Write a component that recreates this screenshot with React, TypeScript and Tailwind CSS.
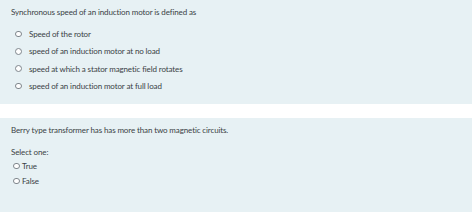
import React from "react";

const Radio = () => (
  <span className="inline-block w-[6.5px] h-[6.5px] rounded-full border border-[#7f868c] bg-white shrink-0" />
);

export default function App() {
  const opts = [
    "Speed of the rotor",
    "speed of an induction motor at no load",
    "speed at which a stator magnetic field rotates",
    "speed of an induction motor at full load",
  ];
  return (
    <div className="w-[474px] h-[214px] bg-white text-[#3a3f44] text-[8px] leading-[10px] tracking-[-0.12px]" style={{ fontFamily: 'Lato, "Noto Sans", sans-serif' }}>
      <div className="w-[472px] h-[104px] bg-[#e7f1f4] pt-[7px] pl-[11px]">
        <div className="h-[10px] flex items-center">Synchronous speed of an induction motor is defined as</div>
        <div className="mt-[12px] flex flex-col gap-[7.3px] pl-[4px]">
          {opts.map((o) => (
            <div key={o} className="flex items-center gap-[7.5px] h-[10px]">
              <Radio />
              <span>{o}</span>
            </div>
          ))}
        </div>
      </div>
      <div className="h-[14px]" />
      <div className="w-[472px] h-[94px] bg-[#e7f1f4] pt-[7px] pl-[11px]">
        <div className="h-[10px] flex items-center">Berry type transformer has has more than two magnetic circuits.</div>
        <div className="mt-[12px] h-[10px] flex items-center">Select one:</div>
        <div className="flex flex-col mt-[4px] gap-[5px] pl-[2px]">
          <div className="flex items-center gap-[2.5px] h-[10px]">
            <Radio />
            <span>True</span>
          </div>
          <div className="flex items-center gap-[2.5px] h-[10px]">
            <Radio />
            <span>False</span>
          </div>
        </div>
      </div>
    </div>
  );
}
